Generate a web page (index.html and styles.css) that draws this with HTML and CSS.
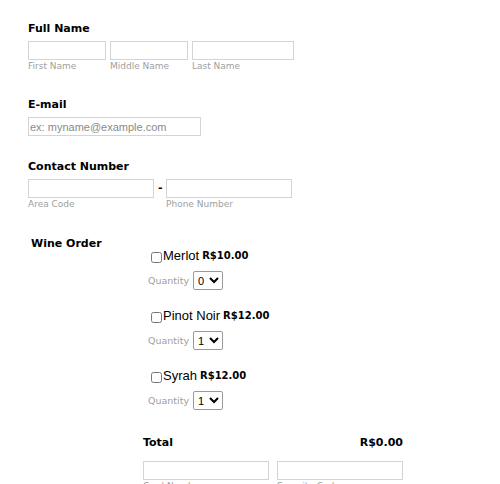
FILE: index.html
```html
<!DOCTYPE html>
<html lang="en">
<head>
    <meta charset="UTF-8">
    <meta name="viewport" content="width=device-width, initial-scale=1.0">
    <title>Wine Order Form</title>
    <link rel="stylesheet" href="styles.css">
</head>
<body>
    <form class="form">
        <div class="form-line">
            <label class="form-label">Full Name</label>
            <div class="field-row">
                <span class="sub-field">
                    <input type="text" class="input w78">
                    <label class="sublabel">First Name</label>
                </span>
                <span class="sub-field">
                    <input type="text" class="input w78">
                    <label class="sublabel">Middle Name</label>
                </span>
                <span class="sub-field">
                    <input type="text" class="input w102">
                    <label class="sublabel">Last Name</label>
                </span>
            </div>
        </div>

        <div class="form-line email-line">
            <label class="form-label">E-mail</label>
            <div class="field-row">
                <input type="email" class="input w173" placeholder="ex: myname@example.com">
            </div>
        </div>

        <div class="form-line">
            <label class="form-label">Contact Number</label>
            <div class="field-row">
                <span class="sub-field">
                    <input type="tel" class="input w126">
                    <label class="sublabel">Area Code</label>
                </span>
                <span class="dash">-</span>
                <span class="sub-field">
                    <input type="tel" class="input w126">
                    <label class="sublabel">Phone Number</label>
                </span>
            </div>
        </div>

        <div class="form-line wine">
            <label class="form-label wine-label">Wine Order</label>
            <div class="products">
                <div class="product">
                    <label class="product-name"><input type="checkbox" class="check">Merlot <b class="price">R$10.00</b></label>
                    <div class="qty">
                        <span class="qty-label">Quantity</span>
                        <select class="qty-select"><option>0</option><option>1</option><option>2</option></select>
                    </div>
                </div>
                <div class="product">
                    <label class="product-name"><input type="checkbox" class="check">Pinot Noir <b class="price">R$12.00</b></label>
                    <div class="qty">
                        <span class="qty-label">Quantity</span>
                        <select class="qty-select"><option>1</option><option>2</option></select>
                    </div>
                </div>
                <div class="product">
                    <label class="product-name"><input type="checkbox" class="check">Syrah <b class="price">R$12.00</b></label>
                    <div class="qty">
                        <span class="qty-label">Quantity</span>
                        <select class="qty-select"><option>1</option><option>2</option></select>
                    </div>
                </div>
                <div class="total">
                    <span>Total</span>
                    <span>R$0.00</span>
                </div>
                <div class="field-row card-row">
                    <span class="sub-field">
                        <input type="text" class="input w126">
                        <label class="sublabel">Card Number</label>
                    </span>
                    <span class="sub-field">
                        <input type="text" class="input w126">
                        <label class="sublabel">Security Code</label>
                    </span>
                </div>
            </div>
        </div>
    </form>
</body>
</html>
```

FILE: styles.css
```css
* {
    margin: 0;
    padding: 0;
    box-sizing: border-box;
}

body {
    font-family: 'DejaVu Sans', Verdana, sans-serif;
    background: #fff;
    color: #000;
    overflow: hidden;
}

.form {
    padding: 22px 0 0 28px;
}

.form-line {
    margin-bottom: 26px;
}

.email-line {
    margin-bottom: 24px;
}

.form-label {
    display: block;
    font-size: 11px;
    font-weight: bold;
    line-height: 14px;
    margin-bottom: 5px;
}

.field-row {
    display: flex;
    align-items: flex-start;
    gap: 4px;
}

.sub-field {
    display: flex;
    flex-direction: column;
}

.input {
    height: 19px;
    border: 1px solid #d4d4d4;
    background: #fff;
    font-family: 'Liberation Sans', Arial, sans-serif;
    font-size: 11px;
    padding: 0 1px;
}

.input::placeholder {
    color: #8a8a8a;
}

.w78 { width: 78px; }
.w102 { width: 102px; }
.w126 { width: 126px; }
.w173 { width: 173px; }

.sublabel {
    font-size: 9px;
    color: #a0a0a0;
    line-height: 12px;
}

.dash {
    width: 4px;
    text-align: center;
    font-weight: bold;
    font-size: 11px;
    line-height: 17px;
}

.wine {
    display: flex;
    flex-direction: column;
    margin-top: 27px;
}

.wine-label {
    margin-left: 3px;
    margin-bottom: 0;
}

.products {
    padding-left: 115px;
    width: 375px;
}

.product {
    margin-bottom: 21px;
}

.product-name {
    display: flex;
    align-items: center;
    margin-left: 8px;
    font-family: 'Liberation Sans', Arial, sans-serif;
    font-size: 13px;
    line-height: 16px;
    margin-top: -3px;
}

.check {
    width: 11px;
    height: 11px;
    margin: 2px 1px 0 0;
}

.price {
    font-family: 'DejaVu Sans', Verdana, sans-serif;
    font-size: 10px;
    margin-left: 3px;
}

.qty {
    display: flex;
    align-items: center;
    gap: 4px;
    margin-top: 7px;
    margin-left: 5px;
}

.qty-label {
    font-size: 9.5px;
    color: #a0a0a0;
}

.qty-select {
    width: 30px;
    height: 19px;
    font-size: 11px;
    border: 1px solid #999;
    border-radius: 2px;
    background: #fff;
}

.total {
    display: flex;
    justify-content: space-between;
    width: 260px;
    font-size: 11px;
    font-weight: bold;
    margin-top: 26px;
    margin-bottom: 12px;
}

.card-row {
    gap: 8px;
}
```
